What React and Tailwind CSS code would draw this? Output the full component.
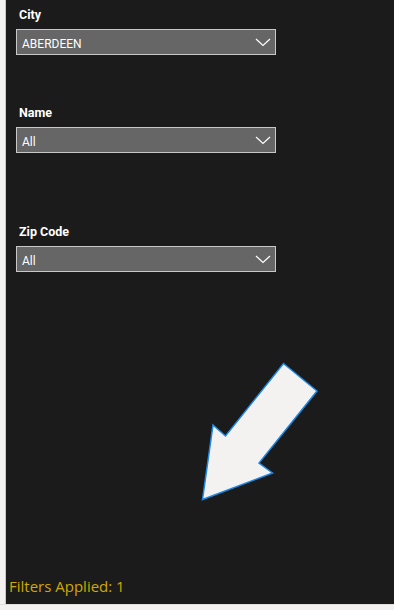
import React from 'react';

const ChevronDown = () => (
  <svg width="16" height="9" viewBox="0 0 16 9" fill="none">
    <path d="M1 1l7 6.5L15 1" stroke="#ffffff" strokeWidth="1.2" />
  </svg>
);

const Slicer = ({ label, value, className }) => (
  <div className={className}>
    <div className="pl-[3px] text-[12.5px] font-bold leading-[16px] text-white">{label}</div>
    <div className="mt-[6px] flex h-[26px] w-[260px] items-center justify-between border border-[#c8c8c8] bg-[#666666] pl-[5px] pr-[4px]">
      <span className="pt-[3px] text-[12px] leading-none text-white">{value}</span>
      <ChevronDown />
    </div>
  </div>
);

const App = () => {
  return (
    <div
      className="flex h-[610px] w-[394px] flex-col overflow-hidden bg-[#f3f2f1]"
      style={{ fontFamily: 'Roboto, "Liberation Sans", sans-serif' }}
    >
      <div className="flex h-[604px] w-full">
        <div className="w-[5px] bg-[#f3f2f1]" />
        <div className="w-px bg-[#b9c6ea]" />
        <div className="relative flex flex-1 flex-col bg-[#1b1b1b]">
          <div className="flex-1 pl-[10px]">
            <Slicer label="City" value="ABERDEEN" className="pt-[7px]" />
            <Slicer label="Name" value="All" className="mt-[50px]" />
            <Slicer label="Zip Code" value="All" className="mt-[71px]" />
          </div>

          <svg
            className="absolute left-[189px] top-[358px]"
            width="128"
            height="146"
            viewBox="195 358 128 146"
          >
            <polygon
              points="283.5,363.5 317,391 259,463 272.5,473 202.5,499.5 213,425 225.5,436"
              fill="#f3f2f1"
              stroke="#1e88e5"
              strokeWidth="1.5"
            />
          </svg>

          <div
            className="pb-[8px] pl-[3px] text-[15px] leading-[20px] text-[#d1a800]"
            style={{ fontFamily: '"Open Sans", "Noto Sans", sans-serif' }}
          >
            Filters Applied: 1
          </div>
        </div>
      </div>
      <div className="h-px w-full bg-[#e1dfdd]" />
    </div>
  );
};

export default App;
